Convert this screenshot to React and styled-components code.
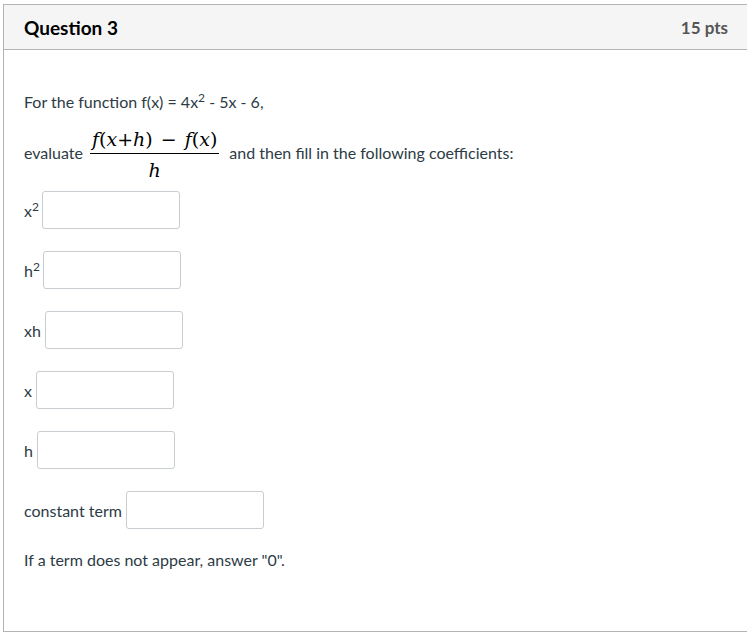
import React from "react";
import styled, { createGlobalStyle } from "styled-components";

const GlobalStyle = createGlobalStyle`
  html, body {
    margin: 0;
    padding: 0;
    background: #ffffff;
    overflow: hidden;
  }
  body {
    font-family: Lato, "Open Sans", sans-serif;
    color: #2d3b45;
  }
`;

const Page = styled.div`
  padding: 4px 0 0 3px;
  width: 744px;
  overflow: hidden;
`;

const Card = styled.div`
  width: 780px;
  height: 626px;
  border: 1px solid #b4b4b4;
  box-sizing: content-box;
  display: flex;
  flex-direction: column;
`;

const Header = styled.div`
  height: 44px;
  background: #f5f5f5;
  border-bottom: 1px solid #b4b4b4;
  display: flex;
  align-items: center;
  justify-content: space-between;
  padding: 0 56px 0 20px;
`;

const Title = styled.span`
  font-size: 19px;
  font-weight: 700;
  color: #000000;
`;

const Points = styled.span`
  font-size: 17px;
  font-weight: 700;
  color: #555555;
`;

const Body = styled.div`
  padding: 40px 20px 0;
  font-size: 16px;
  line-height: 24px;
`;

const Para = styled.p`
  margin: 0 0 ${(p) => p.gap || 14}px;
  sup {
    font-size: 12px;
    line-height: 0;
  }
`;

const Line = styled.div`
  display: flex;
  align-items: center;
  margin-bottom: ${(p) => p.gap || 10}px;
`;

const Frac = styled.span`
  display: inline-flex;
  flex-direction: column;
  align-items: center;
  margin: 0 10px 0 7px;
  padding-top: 4px;
  font-family: "DejaVu Serif", "Liberation Serif", serif;
  font-size: 19px;
  line-height: 22px;
  color: #000;
`;

const Num = styled.span`
  padding: 0 2px 3px;
  border-bottom: 1px solid #000;
`;

const Den = styled.span`
  padding-top: 5px;
`;

const I = styled.i`
  font-style: italic;
`;

const Minus = styled.span`
  margin: 0 8px;
`;

const Row = styled.div`
  display: flex;
  align-items: baseline;
  margin-bottom: 22px;
  &:last-of-type {
    margin-bottom: 19px;
  }
`;

const Label = styled.span`
  margin-right: ${(p) => p.space || 4}px;
  sup {
    font-size: 12px;
    line-height: 0;
  }
`;

const Box = styled.input`
  width: 138px;
  height: 38px;
  box-sizing: border-box;
  border: 1px solid #c7cdd1;
  border-radius: 3px;
  padding: 0 8px;
  font-family: Lato, sans-serif;
  font-size: 16px;
  background: #fff;
`;

const fields = [
  { label: <>x<sup>2</sup></>, space: 3 },
  { label: <>h<sup>2</sup></>, space: 3 },
  { label: "xh", space: 4 },
  { label: "x", space: 4 },
  { label: "h", space: 4 },
  { label: "constant term", space: 4 },
];

export default function App() {
  return (
    <Page>
      <GlobalStyle />
      <Card>
        <Header>
          <Title>Question 3</Title>
          <Points>15 pts</Points>
        </Header>
        <Body>
          <Para gap={10}>
            For the function f(x) = 4x<sup>2</sup> - 5x - 6,
          </Para>
          <Line gap={10}>
            evaluate
            <Frac>
              <Num>
                <I>f</I>(<I>x</I>+<I>h</I>)<Minus>&minus;</Minus><I>f</I>(<I>x</I>)
              </Num>
              <Den>
                <I>h</I>
              </Den>
            </Frac>
            and then fill in the following coefficients:
          </Line>
          {fields.map((f, i) => (
            <Row key={i}>
              <Label space={f.space}>{f.label}</Label>
              <Box type="text" />
            </Row>
          ))}
          <Para>If a term does not appear, answer "0".</Para>
        </Body>
      </Card>
    </Page>
  );
}
